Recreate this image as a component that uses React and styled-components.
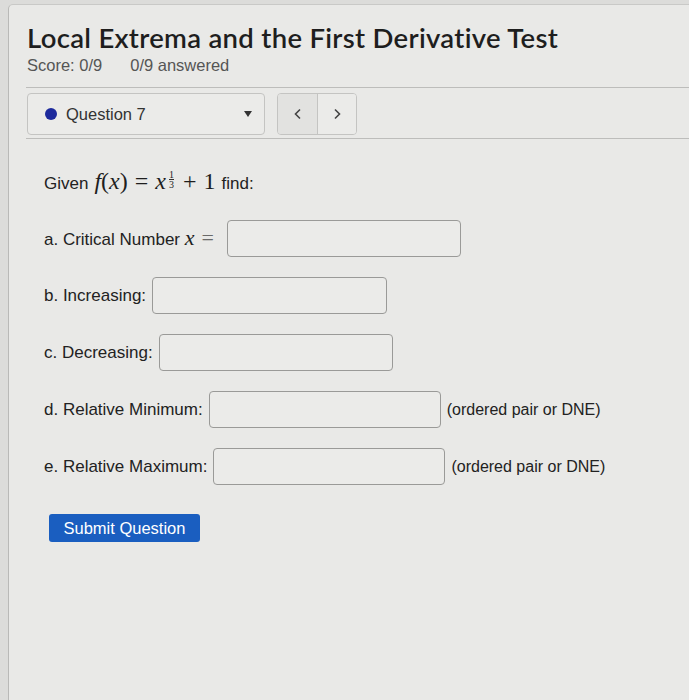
import React from 'react';
import styled, { createGlobalStyle } from 'styled-components';

const GlobalStyle = createGlobalStyle`
  html, body {
    margin: 0;
    padding: 0;
    background: #dcdcda;
  }
  body {
    font-family: "Liberation Sans", Arial, sans-serif;
    color: #222;
  }
`;

const Card = styled.div`
  margin: 4px 0 0 8px;
  min-height: 700px;
  background: #e9e9e7;
  border-left: 1px solid #b9b9b7;
  border-top: 1px solid #c9c9c7;
  border-top-left-radius: 5px;
  padding-left: 17px;
  box-sizing: border-box;
`;

const Header = styled.div`
  padding: 17px 0 12px 1px;
  border-bottom: 1px solid #bdbdbb;
`;

const Title = styled.h1`
  margin: 0;
  font-family: Lato, "Liberation Sans", Arial, sans-serif;
  font-size: 27.5px;
  line-height: 32px;
  font-weight: 600;
  color: #1e1e1e;
  letter-spacing: 0.3px;
`;

const Score = styled.div`
  display: flex;
  gap: 28px;
  font-size: 16.5px;
  line-height: 20px;
  color: #555;
  margin-top: 1px;
`;

const Toolbar = styled.div`
  display: flex;
  align-items: center;
  gap: 12px;
  padding: 5px 0 3px 1px;
  border-bottom: 1px solid #bdbdbb;
`;

const Select = styled.div`
  display: flex;
  align-items: center;
  width: 238px;
  height: 42px;
  box-sizing: border-box;
  padding: 0 12px 0 17px;
  border: 1px solid #c4c4c2;
  border-radius: 4px;
  background: #ebebe9;
  font-size: 16.5px;
  color: #333;
`;

const Dot = styled.span`
  width: 12px;
  height: 12px;
  border-radius: 50%;
  background: #1d2a9c;
  margin-right: 9px;
`;

const Caret = styled.span`
  margin-left: auto;
  width: 0;
  height: 0;
  border-left: 4px solid transparent;
  border-right: 4px solid transparent;
  border-top: 6px solid #333;
`;

const NavGroup = styled.div`
  display: flex;
  height: 40px;
  border: 1px solid #c4c4c2;
  border-radius: 4px;
  overflow: hidden;
`;

const NavButton = styled.button`
  width: 39px;
  height: 100%;
  border: none;
  border-left: ${p => (p.$divider ? '1px solid #c4c4c2' : 'none')};
  background: ${p => (p.$shade ? '#e2e2e0' : '#ebebe9')};
  display: flex;
  align-items: center;
  justify-content: center;
  padding: 0;
`;

const Body = styled.div`
  padding: 33px 0 0 18px;
`;

const Given = styled.div`
  display: flex;
  align-items: center;
  height: 24px;
  font-size: 17px;
  gap: 6px;
`;

const Math = styled.span`
  font-family: "Liberation Serif", "Times New Roman", serif;
  font-size: ${p => p.$size || 24}px;
  color: #1e1e1e;
  display: inline-flex;
  align-items: baseline;
  line-height: 1;
`;

const Var = styled.i`
  font-style: italic;
`;

const Op = styled.span`
  margin: 0 ${p => p.$space || 7}px;
  color: ${p => p.$muted ? '#6a6a6a' : 'inherit'};
`;

const Frac = styled.span`
  display: inline-flex;
  flex-direction: column;
  align-items: center;
  font-size: 10px;
  line-height: 9px;
  transform: translateY(-11px);
  margin: 0 2px 0 3px;
  span + span {
    border-top: 0.8px solid #333;
  }
`;

const Rows = styled.div`
  display: flex;
  flex-direction: column;
  gap: 20px;
  margin-top: 24px;
`;

const Row = styled.div`
  display: flex;
  align-items: center;
  gap: 6px;
  height: 37px;
`;

const Label = styled.span`
  font-size: 17px;
  color: #222;
  display: inline-flex;
  align-items: baseline;
`;

const Input = styled.input`
  width: ${p => p.$w || 234}px;
  height: 37px;
  box-sizing: border-box;
  border: 1px solid #9a9a98;
  border-radius: 4px;
  background: #ebebe9;
  outline: none;
`;

const Hint = styled.span`
  font-size: 16px;
  color: #222;
`;

const Submit = styled.button`
  margin: 29px 0 0 5px;
  width: 151px;
  height: 28px;
  border: none;
  border-radius: 3px;
  background: #1a5ec0;
  color: #fff;
  font-family: "Liberation Sans", Arial, sans-serif;
  font-size: 16.5px;
  padding: 0;
`;

const Chevron = ({ dir }) => (
  <svg width="10" height="12" viewBox="0 0 10 12">
    <path
      d={dir === 'left' ? 'M7 1.5 L2.5 6 L7 10.5' : 'M3 1.5 L7.5 6 L3 10.5'}
      fill="none"
      stroke="#444"
      strokeWidth="1.6"
    />
  </svg>
);

const rows = [
  {
    id: 'a',
    label: (
      <>
        a. Critical Number&nbsp;
        <Math $size={22}><Var>x</Var><Op $muted $space={7}>=</Op></Math>
      </>
    ),
    w: 234,
  },
  { id: 'b', label: 'b. Increasing:', w: 235 },
  { id: 'c', label: 'c. Decreasing:', w: 234 },
  { id: 'd', label: 'd. Relative Minimum:', w: 232, hint: true },
  { id: 'e', label: 'e. Relative Maximum:', w: 232, hint: true },
];

export default function App() {
  return (
    <>
      <GlobalStyle />
      <Card>
        <Header>
          <Title>Local Extrema and the First Derivative Test</Title>
          <Score>
            <span>Score: 0/9</span>
            <span>0/9 answered</span>
          </Score>
        </Header>
        <Toolbar>
          <Select>
            <Dot />
            Question 7
            <Caret />
          </Select>
          <NavGroup>
            <NavButton $shade><Chevron dir="left" /></NavButton>
            <NavButton $divider><Chevron dir="right" /></NavButton>
          </NavGroup>
        </Toolbar>
        <Body>
          <Given>
            Given
            <Math>
              <Var>f</Var>(<Var>x</Var>)
              <Op>=</Op>
              <Var>x</Var>
              <Frac><span>1</span><span>3</span></Frac>
              <Op>+</Op>1
            </Math>
            find:
          </Given>
          <Rows>
            {rows.map(r => (
              <Row key={r.id}>
                <Label>{r.label}</Label>
                <Input $w={r.w} />
                {r.hint && <Hint>(ordered pair or DNE)</Hint>}
              </Row>
            ))}
          </Rows>
          <Submit>Submit Question</Submit>
        </Body>
      </Card>
    </>
  );
}
